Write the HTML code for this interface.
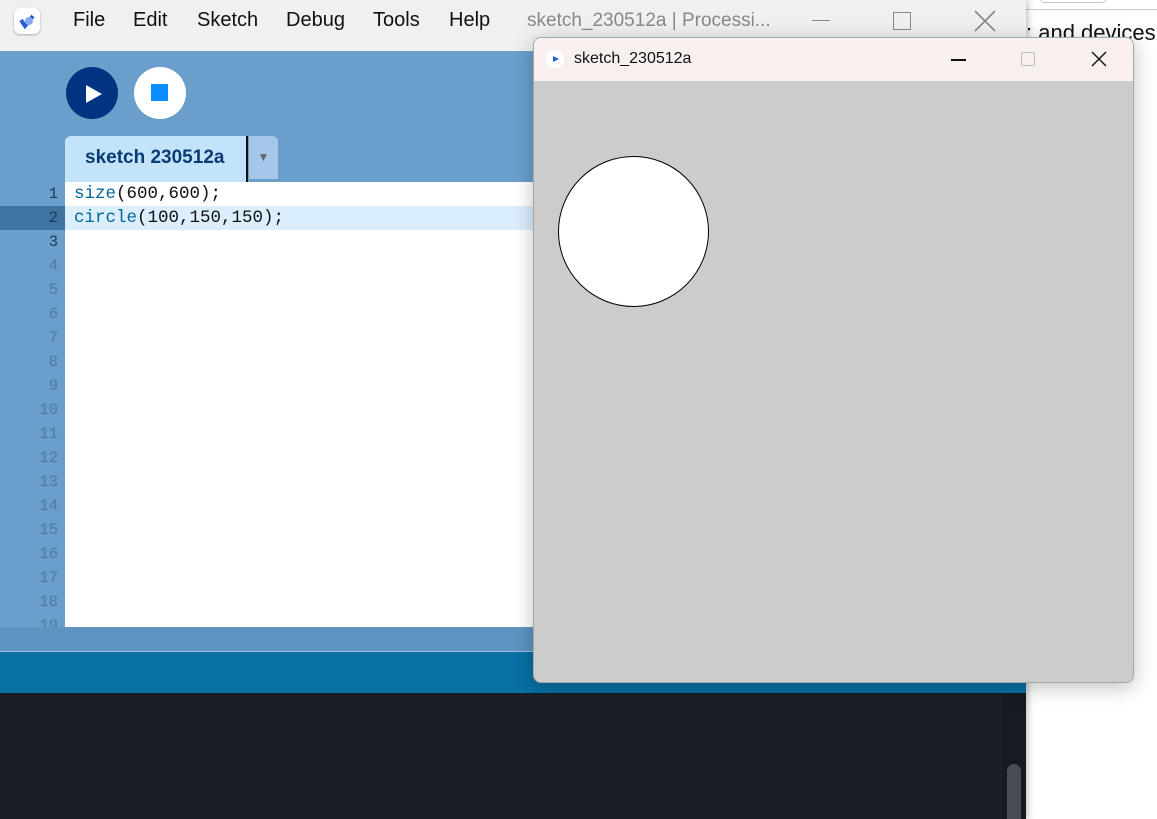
<!DOCTYPE html>
<html><head><style>
*{margin:0;padding:0;box-sizing:border-box}
body{width:1157px;height:819px;overflow:hidden;position:relative;background:#fff;font-family:"Liberation Sans",sans-serif}
.a{position:absolute}
.menu{font-size:20px;color:#111;top:9px;white-space:nowrap}
.ln{position:absolute;left:0;width:58px;text-align:right;font-family:"Liberation Mono",monospace;font-size:15.5px;color:#4f7aa3;height:24px;line-height:24px}
.code{position:absolute;left:74px;font-family:"Liberation Mono",monospace;font-size:17.5px;color:#111;height:24px;line-height:24px;white-space:nowrap}
</style></head><body>
<!-- right background -->
<div class="a" style="left:1026px;top:9px;width:131px;height:1px;background:#ccc"></div>
<div class="a" style="left:1040px;top:-4px;width:66px;height:7px;border:1px solid #ccc;border-radius:4px"></div>
<div class="a" style="left:1026px;top:20px;font-size:22px;color:#111;white-space:nowrap">: and devices</div>
<!-- main window -->
<div class="a" style="left:0;top:0;width:1026px;height:819px;background:#6a9fcc;box-shadow:2px 0 6px rgba(0,0,0,.25);overflow:hidden">
<div class="a" style="left:0;top:0;width:1026px;height:51px;background:#f0f0f0"></div>
<div class="a" style="left:14px;top:8px;width:26px;height:26px;background:#fff;border-radius:6px;box-shadow:0 1px 2px rgba(0,0,0,.3)"><svg width="26" height="26"><path d="M7 12l4 6 8-10" stroke="#2a5bd7" stroke-width="4" fill="none"/><circle cx="15" cy="13" r="4" fill="#8aa9f0"/></svg></div>
<div class="a menu" style="left:73px">File</div>
<div class="a menu" style="left:133px">Edit</div>
<div class="a menu" style="left:197px">Sketch</div>
<div class="a menu" style="left:286px">Debug</div>
<div class="a menu" style="left:373px">Tools</div>
<div class="a menu" style="left:449px">Help</div>
<div class="a menu" style="left:527px;color:#888;font-size:19px;top:10px">sketch_230512a | Processi...</div>
<div class="a" style="left:812px;top:20px;width:18px;height:1px;background:#888"></div>
<div class="a" style="left:893px;top:12px;width:18px;height:18px;border:1.5px solid #888"></div>
<svg class="a" style="left:974px;top:10px" width="22" height="22"><path d="M1 1L21 21M21 1L1 21" stroke="#888" stroke-width="1.6"/></svg>
<!-- toolbar -->
<div class="a" style="left:66px;top:67px;width:52px;height:52px;border-radius:50%;background:#003380"></div>
<svg class="a" style="left:84px;top:84px" width="20" height="20"><path d="M2 1L18 10L2 19Z" fill="#fff"/></svg>
<div class="a" style="left:134px;top:67px;width:52px;height:52px;border-radius:50%;background:#fff"></div>
<div class="a" style="left:151px;top:84px;width:17px;height:17px;background:#0a8cff"></div>
<div class="a" style="left:65px;top:136px;width:182px;height:46px;background:#c3e3fb;border-radius:6px 0 0 0"></div>
<div class="a" style="left:85px;top:147px;font-size:19px;font-weight:bold;color:#0b3b73;white-space:nowrap">sketch 230512a</div>
<div class="a" style="left:246px;top:136px;width:2px;height:46px;background:#111"></div>
<div class="a" style="left:249px;top:136px;width:29px;height:43px;background:#a5c8ea;border-radius:0 6px 0 0;color:#666;font-size:12px;text-align:center;line-height:42px">▼</div>
<!-- editor -->
<div class="a" style="left:65px;top:182px;width:470px;height:445px;background:#fff"></div>
<div class="a" style="left:0;top:206px;width:65px;height:24px;background:#3f74a0"></div>
<div class="a" style="left:65px;top:206px;width:470px;height:24px;background:#dbeefe"></div>
<div class="ln" style="top:182px;color:#1a3a5c">1</div>
<div class="ln" style="top:206px;color:#1a3a5c">2</div>
<div class="ln" style="top:230px;color:#1a3a5c">3</div>
<div class="ln" style="top:254px">4</div><div class="ln" style="top:278px">5</div><div class="ln" style="top:302px">6</div><div class="ln" style="top:326px">7</div><div class="ln" style="top:350px">8</div><div class="ln" style="top:374px">9</div><div class="ln" style="top:398px">10</div><div class="ln" style="top:422px">11</div><div class="ln" style="top:446px">12</div><div class="ln" style="top:470px">13</div><div class="ln" style="top:494px">14</div><div class="ln" style="top:518px">15</div><div class="ln" style="top:542px">16</div><div class="ln" style="top:566px">17</div><div class="ln" style="top:590px">18</div><div class="ln" style="top:614px;height:13px;overflow:hidden">19</div>
<div class="code" style="top:182px"><span style="color:#006699">size</span>(600,600);</div>
<div class="code" style="top:206px"><span style="color:#006699">circle</span>(100,150,150);</div>
<div class="a" style="left:0;top:627px;width:1026px;height:24px;background:#5e94c2"></div>
<div class="a" style="left:0;top:651px;width:1026px;height:1px;background:#9cc0de"></div>
<div class="a" style="left:0;top:652px;width:1026px;height:41px;background:#0870a3"></div>
<div class="a" style="left:0;top:693px;width:1026px;height:126px;background:#1a1f27"></div>
<div class="a" style="left:1002px;top:693px;width:24px;height:126px;background:#161a21"></div>
<div class="a" style="left:1007px;top:764px;width:14px;height:70px;background:#464d55;border-radius:7px"></div>
</div>
<!-- sketch window -->
<div class="a" style="left:533px;top:37px;width:601px;height:646px;background:#ccc;border:1px solid #a8a8a8;border-radius:8px;overflow:hidden;box-shadow:0 4px 20px rgba(0,0,0,.25)">
 <div class="a" style="left:0;top:0;width:600px;height:43px;background:#f8f0ee"></div>
 <div class="a" style="left:12px;top:12px;width:18px;height:18px;border-radius:50%;background:#fff"></div>
 <svg class="a" style="left:18px;top:17px" width="8" height="8"><path d="M1 1L7 4L1 7Z" fill="#2a5bd7"/></svg>
 <div class="a" style="left:40px;top:12px;font-size:16px;color:#111">sketch_230512a</div>
 <div class="a" style="left:417px;top:21px;width:15px;height:1.5px;background:#111"></div>
 <div class="a" style="left:487px;top:14px;width:14px;height:14px;border:1px solid #bbb;border-radius:2px"></div>
 <svg class="a" style="left:557px;top:13px" width="16" height="16"><path d="M1 1L15 15M15 1L1 15" stroke="#111" stroke-width="1.4"/></svg>
 <div class="a" style="left:24px;top:118px;width:151px;height:151px;border-radius:50%;background:#fff;border:1px solid #000"></div>
</div>
</body></html>
